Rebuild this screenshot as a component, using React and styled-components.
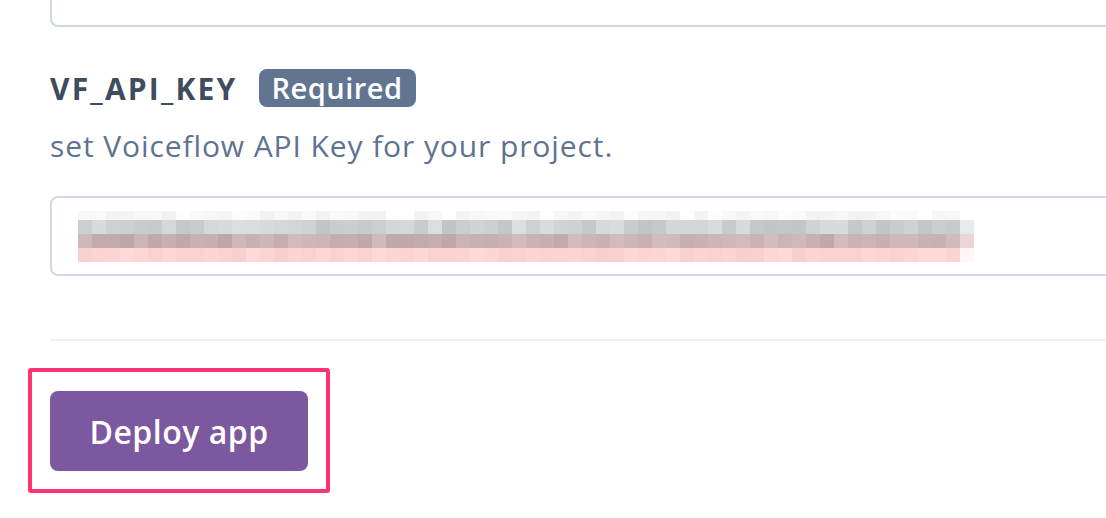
import React from 'react';
import styled, { createGlobalStyle } from 'styled-components';

const Global = createGlobalStyle`
  html, body {
    margin: 0;
    padding: 0;
    background: #ffffff;
    overflow: hidden;
  }
  body {
    font-family: "Open Sans", Lato, sans-serif;
  }
`;

const Page = styled.div`
  width: 1106px;
  height: 518px;
  overflow: hidden;
  padding-left: 50px;
  box-sizing: border-box;
`;

const Form = styled.div`
  width: 1200px;
  margin-top: -52px;
  display: flex;
  flex-direction: column;
`;

const Input = styled.div`
  height: ${p => p.h}px;
  border: 2px solid #cfd7e6;
  border-radius: 8px;
  box-sizing: border-box;
  background: #fff;
  display: flex;
  align-items: center;
  padding-left: 26px;
`;

const Field = styled.div`
  margin-top: ${p => p.top}px;
  display: flex;
  flex-direction: column;
`;

const LabelRow = styled.div`
  display: flex;
  align-items: center;
  gap: 21px;
  height: 40px;
`;

const Label = styled.span`
  font-size: 30px;
  font-weight: 700;
  color: #3f4b5e;
  letter-spacing: 2.2px;
`;

const Badge = styled.span`
  background: #617591;
  color: #fff;
  font-size: 29px;
  font-weight: 600;
  letter-spacing: 0.5px;
  padding: 0 13px;
  height: 38px;
  line-height: 38px;
  border-radius: 8px;
`;

const Hint = styled.p`
  margin: 18px 0 30px;
  font-size: 30px;
  letter-spacing: 0.9px;
  line-height: 40px;
  color: #5f7390;
`;

const Mosaic = styled.div`
  display: flex;
  flex-direction: column;
`;

const MosaicRow = styled.div`
  display: flex;
  height: ${p => p.h}px;
`;

const Cell = styled.div`
  width: 14px;
  height: 100%;
`;

const Divider = styled.div`
  height: 2px;
  background: #eef0f5;
  margin-top: 63px;
`;

const Highlight = styled.div`
  align-self: flex-start;
  margin: 27px 0 0 -22px;
  padding: 19px 18px 18px 18px;
  border: 4px solid #fe3370;
  border-radius: 3px;
`;

const DeployButton = styled.button`
  width: 258px;
  height: 80px;
  border: none;
  border-radius: 8px;
  background: #7b58a0;
  color: #fff;
  font-family: "Open Sans", Lato, sans-serif;
  font-size: 32px;
  font-weight: 600;
  letter-spacing: 0.5px;
  cursor: pointer;
`;

function rng(seed) {
  let s = seed;
  return () => {
    s = (s * 9301 + 49297) % 233280;
    return s / 233280;
  };
}

const rows = [
  { h: 9, base: [248, 248, 248], spread: 14 },
  { h: 14, base: [205, 211, 213], spread: 26 },
  { h: 14, base: [200, 178, 180], spread: 22 },
  { h: 14, base: [252, 212, 212], spread: 10 },
];

function BlurredValue() {
  const r = rng(7);
  const count = 64;
  return (
    <Mosaic>
      {rows.map((row, i) => (
        <MosaicRow key={i} h={row.h}>
          {Array.from({ length: count }).map((_, j) => {
            const d = (r() - 0.5) * row.spread;
            const last = j === count - 1;
            const c = row.base.map(v => Math.round(Math.min(255, v + d + (last ? 30 : 0))));
            return <Cell key={j} style={{ background: `rgb(${c.join(',')})` }} />;
          })}
        </MosaicRow>
      ))}
    </Mosaic>
  );
}

export default function App() {
  return (
    <>
      <Global />
      <Page>
        <Form>
          <Input h={79} />
          <Field top={41}>
            <LabelRow>
              <Label>VF_API_KEY</Label>
              <Badge>Required</Badge>
            </LabelRow>
            <Hint>set Voiceflow API Key for your project.</Hint>
            <Input h={80}>
              <BlurredValue />
            </Input>
          </Field>
          <Divider />
          <Highlight>
            <DeployButton>Deploy app</DeployButton>
          </Highlight>
        </Form>
      </Page>
    </>
  );
}
